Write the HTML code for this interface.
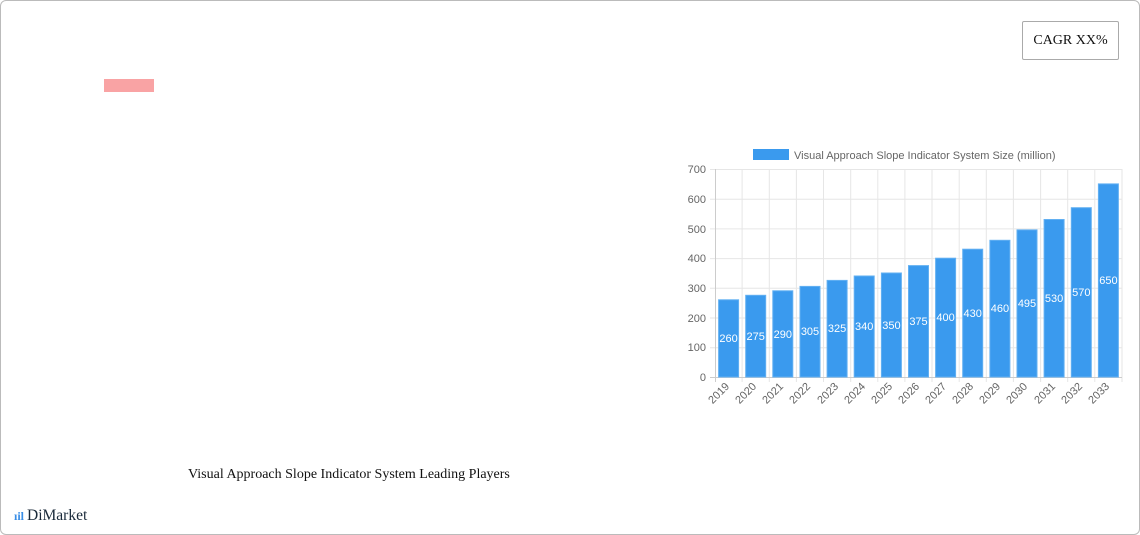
<!DOCTYPE html>
<html><head><meta charset="utf-8"><style>
html,body{margin:0;padding:0;background:#fff;}
.wrap{position:relative;width:1138px;height:533px;border:1px solid #bbb;border-radius:6px;overflow:hidden;font-family:"Liberation Serif",serif;}
.cagr{position:absolute;left:1021px;top:20px;width:95px;height:37px;border:1px solid #aaa;border-radius:2px;font-size:14px;line-height:37px;text-align:center;color:#111;}
.pink{position:absolute;left:103px;top:78px;width:50px;height:13px;background:#f9a3a4;}
.lead{position:absolute;left:187px;top:466px;font-size:14px;color:#111;}
.logo{position:absolute;left:13px;top:506px;font-size:15.5px;color:#1a2a3a;}
.logo b{color:#3a8ee6;font-weight:bold;font-size:12px;margin-right:3px;}
svg{position:absolute;left:0;top:-1px;}
</style></head><body><div class="wrap">
<div class="cagr">CAGR XX%</div>
<div class="pink"></div>
<div class="lead">Visual Approach Slope Indicator System Leading Players</div>
<div class="logo"><b>ıil</b>DiMarket</div>
<svg width="1138" height="533" font-family="Liberation Sans, sans-serif">
<rect x="752" y="149" width="36" height="11" fill="#3a9aee"/>
<text x="793" y="159" font-size="11" fill="#666">Visual Approach Slope Indicator System Size (million)</text>
<g stroke="#e6e6e6" stroke-width="1">
<line x1="709" y1="169.5" x2="1121" y2="169.5"/><line x1="709" y1="199.2" x2="1121" y2="199.2"/><line x1="709" y1="228.9" x2="1121" y2="228.9"/><line x1="709" y1="258.6" x2="1121" y2="258.6"/><line x1="709" y1="288.3" x2="1121" y2="288.3"/><line x1="709" y1="318" x2="1121" y2="318"/><line x1="709" y1="347.7" x2="1121" y2="347.7"/>
<line x1="741.1" y1="169" x2="741.1" y2="382"/><line x1="768.3" y1="169" x2="768.3" y2="382"/><line x1="795.4" y1="169" x2="795.4" y2="382"/><line x1="822.5" y1="169" x2="822.5" y2="382"/><line x1="849.7" y1="169" x2="849.7" y2="382"/><line x1="876.8" y1="169" x2="876.8" y2="382"/><line x1="903.9" y1="169" x2="903.9" y2="382"/><line x1="931" y1="169" x2="931" y2="382"/><line x1="958.2" y1="169" x2="958.2" y2="382"/><line x1="985.3" y1="169" x2="985.3" y2="382"/><line x1="1012.4" y1="169" x2="1012.4" y2="382"/><line x1="1039.6" y1="169" x2="1039.6" y2="382"/><line x1="1066.7" y1="169" x2="1066.7" y2="382"/><line x1="1093.8" y1="169" x2="1093.8" y2="382"/><line x1="1121" y1="169" x2="1121" y2="382"/>
</g>
<line x1="714.5" y1="169" x2="714.5" y2="382" stroke="#ccc"/>
<line x1="709" y1="377.5" x2="1121" y2="377.5" stroke="#ccc"/>
<g font-size="11" fill="#666" text-anchor="end">
<text x="705" y="173">700</text><text x="705" y="203">600</text><text x="705" y="233">500</text><text x="705" y="262">400</text><text x="705" y="292">300</text><text x="705" y="322">200</text><text x="705" y="351">100</text><text x="705" y="381">0</text>
</g>
<g fill="#3a9aee" stroke="#62b0f2" stroke-width="1">
<rect x="717.6" y="299.8" width="20" height="77.2"/><rect x="744.7" y="295.3" width="20" height="81.7"/><rect x="771.8" y="290.8" width="20" height="86.2"/><rect x="799" y="286.4" width="20" height="90.6"/><rect x="826.1" y="280.4" width="20" height="96.6"/><rect x="853.2" y="276" width="20" height="101"/><rect x="880.4" y="273" width="20" height="104"/><rect x="907.5" y="265.6" width="20" height="111.4"/><rect x="934.6" y="258.2" width="20" height="118.8"/><rect x="961.7" y="249.2" width="20" height="127.8"/><rect x="988.9" y="240.3" width="20" height="136.7"/><rect x="1016" y="229.9" width="20" height="147.1"/><rect x="1043.1" y="219.5" width="20" height="157.5"/><rect x="1070.3" y="207.7" width="20" height="169.3"/><rect x="1097.4" y="183.9" width="20" height="193.1"/>
</g>
<g font-size="11" fill="#fff" text-anchor="middle">
<text x="727.6" y="342">260</text><text x="754.7" y="340">275</text><text x="781.8" y="338">290</text><text x="809" y="335">305</text><text x="836.1" y="332">325</text><text x="863.2" y="330">340</text><text x="890.4" y="329">350</text><text x="917.5" y="325">375</text><text x="944.6" y="321">400</text><text x="971.7" y="317">430</text><text x="998.9" y="312">460</text><text x="1026" y="307">495</text><text x="1053.1" y="302">530</text><text x="1080.3" y="296">570</text><text x="1107.4" y="284">650</text>
</g>
<g font-size="11" fill="#666" text-anchor="end">
<text transform="translate(729,387) rotate(-45)">2019</text><text transform="translate(756,387) rotate(-45)">2020</text><text transform="translate(783,387) rotate(-45)">2021</text><text transform="translate(810,387) rotate(-45)">2022</text><text transform="translate(838,387) rotate(-45)">2023</text><text transform="translate(865,387) rotate(-45)">2024</text><text transform="translate(892,387) rotate(-45)">2025</text><text transform="translate(919,387) rotate(-45)">2026</text><text transform="translate(946,387) rotate(-45)">2027</text><text transform="translate(973,387) rotate(-45)">2028</text><text transform="translate(1000,387) rotate(-45)">2029</text><text transform="translate(1027,387) rotate(-45)">2030</text><text transform="translate(1055,387) rotate(-45)">2031</text><text transform="translate(1082,387) rotate(-45)">2032</text><text transform="translate(1109,387) rotate(-45)">2033</text>
</g>
</svg>
</div></body></html>
